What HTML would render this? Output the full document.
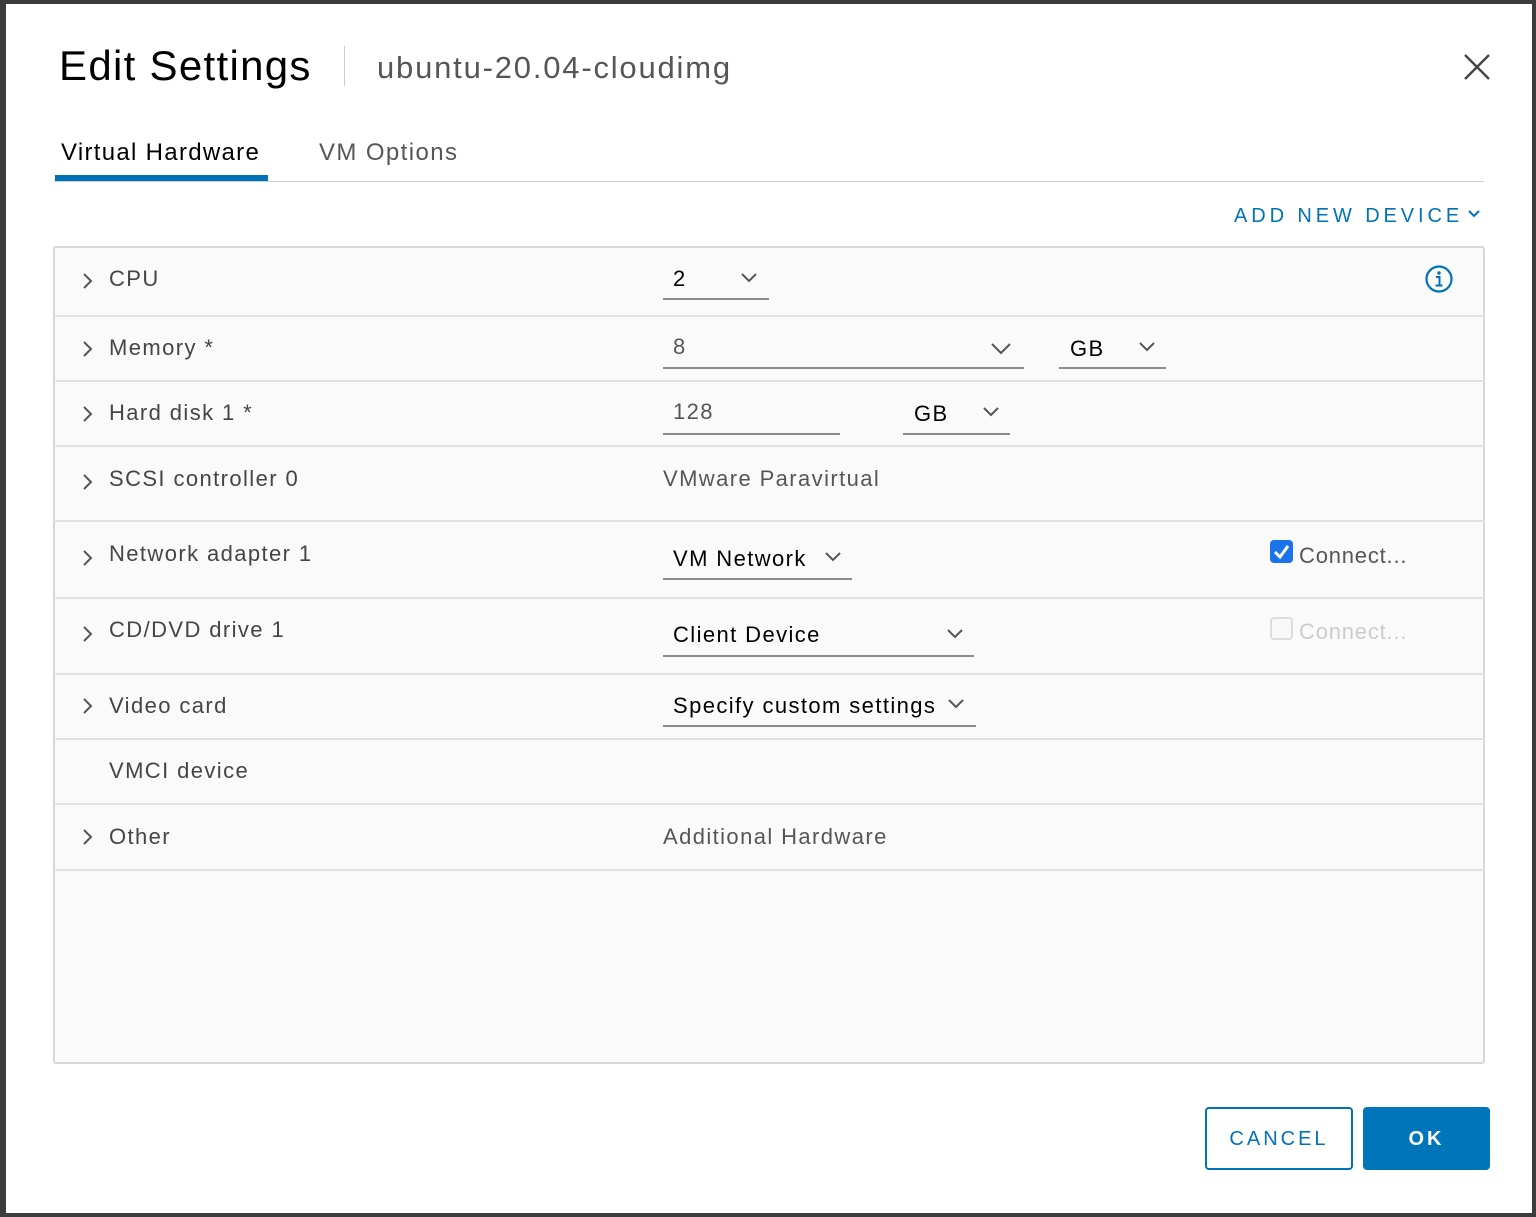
<!DOCTYPE html>
<html><head><meta charset="utf-8"><style>
*{margin:0;padding:0;box-sizing:border-box}
body{width:1536px;height:1217px;background:#3c3c3c;position:relative;overflow:hidden;font-family:"Liberation Sans",sans-serif}
.dlg{position:absolute;left:6px;top:4px;width:1526px;height:1209px;background:#fff}
.t{position:absolute;line-height:1;white-space:nowrap}
.lbl{font-size:22px;color:#454545;left:109px;letter-spacing:1.4px}
.val{font-size:22px;color:#000;letter-spacing:1.4px}
.gray{color:#565656}
.ul{position:absolute;height:2px;background:#8c8c8c}
.sep{position:absolute;left:54px;width:1430px;height:2px;background:#e2e2e2}
svg.c{position:absolute}
</style></head><body>
<div class="dlg"></div>
<div class="t" style="left:59px;top:45px;font-size:42px;color:#000;letter-spacing:1.3px">Edit Settings</div>
<div style="position:absolute;left:344px;top:46px;width:1px;height:40px;background:#ccc"></div>
<div class="t" style="left:377px;top:52px;font-size:31px;color:#565656;letter-spacing:1.8px">ubuntu-20.04-cloudimg</div>
<svg class="c" style="left:1462px;top:52px" width="30" height="30"><path d="M3 3L27 27M27 3L3 27" stroke="#444" stroke-width="2.4"/></svg>
<div class="t" style="left:61px;top:141px;font-size:24px;color:#000;letter-spacing:1.3px">Virtual Hardware</div>
<div class="t" style="left:319px;top:141px;font-size:24px;color:#565656;letter-spacing:1.4px">VM Options</div>
<div style="position:absolute;left:54px;top:181px;width:1430px;height:1px;background:#ccc"></div>
<div style="position:absolute;left:55px;top:175px;width:213px;height:6px;background:#0072b8"></div>
<div class="t" style="left:1234px;top:206px;font-size:20px;color:#0072b8;letter-spacing:3.9px">ADD NEW DEVICE</div>
<svg class="c" style="left:1467px;top:209px" width="14" height="10"><path d="M2 2L7 7L12 2" stroke="#0072b8" stroke-width="2" fill="none"/></svg>
<div style="position:absolute;left:53px;top:246px;width:1432px;height:818px;background:#fafafa;border:2px solid #d8d8d8;border-radius:3px"></div>
<div class="sep" style="top:315px"></div><div class="sep" style="top:380px"></div><div class="sep" style="top:445px"></div><div class="sep" style="top:520px"></div><div class="sep" style="top:597px"></div><div class="sep" style="top:673px"></div><div class="sep" style="top:738px"></div><div class="sep" style="top:803px"></div><div class="sep" style="top:869px"></div>
<svg class="c" style="left:81px;top:271px" width="14" height="20"><path d="M3 3L10 10L3 17" stroke="#555" stroke-width="2" fill="none"/></svg>
<svg class="c" style="left:81px;top:339px" width="14" height="20"><path d="M3 3L10 10L3 17" stroke="#555" stroke-width="2" fill="none"/></svg>
<svg class="c" style="left:81px;top:404px" width="14" height="20"><path d="M3 3L10 10L3 17" stroke="#555" stroke-width="2" fill="none"/></svg>
<svg class="c" style="left:81px;top:472px" width="14" height="20"><path d="M3 3L10 10L3 17" stroke="#555" stroke-width="2" fill="none"/></svg>
<svg class="c" style="left:81px;top:548px" width="14" height="20"><path d="M3 3L10 10L3 17" stroke="#555" stroke-width="2" fill="none"/></svg>
<svg class="c" style="left:81px;top:624px" width="14" height="20"><path d="M3 3L10 10L3 17" stroke="#555" stroke-width="2" fill="none"/></svg>
<svg class="c" style="left:81px;top:696px" width="14" height="20"><path d="M3 3L10 10L3 17" stroke="#555" stroke-width="2" fill="none"/></svg>
<svg class="c" style="left:81px;top:827px" width="14" height="20"><path d="M3 3L10 10L3 17" stroke="#555" stroke-width="2" fill="none"/></svg>
<div class="t lbl" style="top:268px">CPU</div>
<div class="t lbl" style="top:337px">Memory *</div>
<div class="t lbl" style="top:402px">Hard disk 1 *</div>
<div class="t lbl" style="top:468px">SCSI controller 0</div>
<div class="t lbl" style="top:543px">Network adapter 1</div>
<div class="t lbl" style="top:619px">CD/DVD drive 1</div>
<div class="t lbl" style="top:695px">Video card</div>
<div class="t lbl" style="top:760px">VMCI device</div>
<div class="t lbl" style="top:826px">Other</div>
<div class="t val" style="left:673px;top:268px">2</div>
<svg class="c" style="left:740px;top:272px" width="18" height="12"><path d="M2 2L9 9L16 2" stroke="#555" stroke-width="2" fill="none"/></svg>
<div class="ul" style="left:663px;top:298px;width:106px"></div>
<svg class="c" style="left:1424px;top:264px" width="30" height="30"><circle cx="15" cy="15" r="12.5" stroke="#0072b8" stroke-width="2.2" fill="none"/><circle cx="15" cy="9" r="1.7" fill="#0072b8"/><path d="M12 13h3.5v8M11.5 21.5h7" stroke="#0072b8" stroke-width="2" fill="none"/></svg>
<div class="t val gray" style="left:673px;top:336px">8</div>
<svg class="c" style="left:990px;top:342px" width="22" height="14"><path d="M2 2L11 11L20 2" stroke="#555" stroke-width="2" fill="none"/></svg>
<div class="ul" style="left:663px;top:367px;width:361px"></div>
<div class="t val" style="left:1070px;top:338px">GB</div>
<svg class="c" style="left:1138px;top:341px" width="18" height="12"><path d="M2 2L9 9L16 2" stroke="#555" stroke-width="2" fill="none"/></svg>
<div class="ul" style="left:1059px;top:367px;width:107px"></div>
<div class="t val gray" style="left:673px;top:401px">128</div>
<div class="ul" style="left:663px;top:433px;width:177px"></div>
<div class="t val" style="left:914px;top:403px">GB</div>
<svg class="c" style="left:982px;top:406px" width="18" height="12"><path d="M2 2L9 9L16 2" stroke="#555" stroke-width="2" fill="none"/></svg>
<div class="ul" style="left:903px;top:433px;width:107px"></div>
<div class="t val gray" style="left:663px;top:468px">VMware Paravirtual</div>
<div class="t val" style="left:673px;top:548px">VM Network</div>
<svg class="c" style="left:824px;top:551px" width="18" height="12"><path d="M2 2L9 9L16 2" stroke="#555" stroke-width="2" fill="none"/></svg>
<div class="ul" style="left:663px;top:578px;width:189px"></div>
<div style="position:absolute;left:1270px;top:540px;width:23px;height:23px;background:#1a73e8;border-radius:4px"></div>
<svg class="c" style="left:1270px;top:540px" width="23" height="23"><path d="M5 12L10 17L18 6" stroke="#fff" stroke-width="3" fill="none"/></svg>
<div class="t val gray" style="left:1299px;top:545px;letter-spacing:0.8px">Connect...</div>
<div style="position:absolute;left:1270px;top:617px;width:23px;height:23px;border:2px solid #ddd;border-radius:4px;background:#f8f8f8"></div>
<div class="t val" style="left:1299px;top:621px;color:#ccc;letter-spacing:0.8px">Connect...</div>
<div class="t val" style="left:673px;top:624px">Client Device</div>
<svg class="c" style="left:946px;top:628px" width="18" height="12"><path d="M2 2L9 9L16 2" stroke="#555" stroke-width="2" fill="none"/></svg>
<div class="ul" style="left:663px;top:655px;width:311px"></div>
<div class="t val" style="left:673px;top:695px">Specify custom settings</div>
<svg class="c" style="left:947px;top:698px" width="18" height="12"><path d="M2 2L9 9L16 2" stroke="#555" stroke-width="2" fill="none"/></svg>
<div class="ul" style="left:663px;top:725px;width:313px"></div>
<div class="t val gray" style="left:663px;top:826px">Additional Hardware</div>
<div style="position:absolute;left:1205px;top:1107px;width:148px;height:63px;border:2px solid #0072b8;border-radius:4px;background:#fff"></div>
<div class="t" style="left:1205px;width:148px;text-align:center;top:1129px;font-size:20px;color:#0072b8;letter-spacing:3px">CANCEL</div>
<div style="position:absolute;left:1363px;top:1107px;width:127px;height:63px;background:#0075b9;border-radius:4px"></div>
<div class="t" style="left:1363px;width:127px;text-align:center;top:1129px;font-size:20px;color:#fff;letter-spacing:3px;font-weight:bold">OK</div>
</body></html>
